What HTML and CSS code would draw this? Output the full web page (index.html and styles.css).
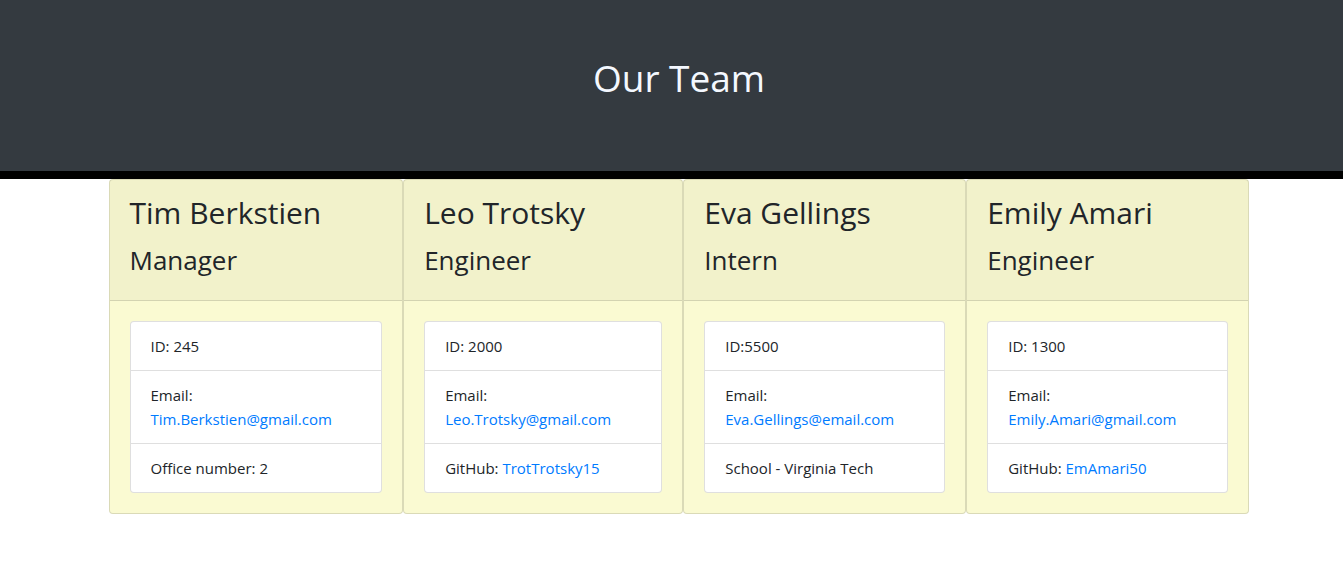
FILE: index.html
```html
<!DOCTYPE html>
<html lang="en">
<head>
  <meta charset="UTF-8" />
  <title>Our Team</title>
  <link rel="stylesheet" href="styles.css">
</head>
<body>
  <header class="team-header">
    <h1>Our Team</h1>
  </header>

  <main class="team-container">
    <div class="team-row">
      <div class="employee-card">
        <div class="card-header">
          <h2>Tim Berkstien</h2>
          <h3>Manager</h3>
        </div>
        <div class="card-body">
          <ul class="info-list">
            <li>ID: 245</li>
            <li>Email: <a href="mailto:Tim.Berkstien@gmail.com">Tim.Berkstien@gmail.com</a></li>
            <li>Office number: 2</li>
          </ul>
        </div>
      </div>

      <div class="employee-card">
        <div class="card-header">
          <h2>Leo Trotsky</h2>
          <h3>Engineer</h3>
        </div>
        <div class="card-body">
          <ul class="info-list">
            <li>ID: 2000</li>
            <li>Email: <a href="mailto:Leo.Trotsky@gmail.com">Leo.Trotsky@gmail.com</a></li>
            <li>GitHub: <a href="#">TrotTrotsky15</a></li>
          </ul>
        </div>
      </div>

      <div class="employee-card">
        <div class="card-header">
          <h2>Eva Gellings</h2>
          <h3>Intern</h3>
        </div>
        <div class="card-body">
          <ul class="info-list">
            <li>ID:5500</li>
            <li>Email: <a href="mailto:Eva.Gellings@email.com">Eva.Gellings@email.com</a></li>
            <li>School - Virginia Tech</li>
          </ul>
        </div>
      </div>

      <div class="employee-card">
        <div class="card-header">
          <h2>Emily Amari</h2>
          <h3>Engineer</h3>
        </div>
        <div class="card-body">
          <ul class="info-list">
            <li>ID: 1300</li>
            <li>Email: <a href="mailto:Emily.Amari@gmail.com">Emily.Amari@gmail.com</a></li>
            <li>GitHub: <a href="#">EmAmari50</a></li>
          </ul>
        </div>
      </div>
    </div>
  </main>
</body>
</html>
```

FILE: styles.css
```css
:root {
  --dark: #343a40;
  --text: #212529;
  --link: #007bff;
  --card-bg: #fafad2;
  --border: rgba(0, 0, 0, 0.125);
  --font: 'Segoe UI', 'Open Sans', sans-serif;
}

* {
  box-sizing: border-box;
}

body {
  margin: 0;
  font-family: var(--font);
  font-size: 15px;
  line-height: 24px;
  color: var(--text);
  background: #fff;
}

.team-header {
  background: var(--dark);
  border-bottom: 8px solid #000;
  height: 179px;
  padding-top: 54px;
  padding-left: 15px;
  text-align: center;
}

.team-header h1 {
  margin: 0;
  font-size: 37px;
  font-weight: 400;
  line-height: 48px;
  color: #f4f8ff;
}

.team-container {
  width: 1140px;
  margin-left: calc(50% - 563px);
}

.team-row {
  display: flex;
}

.employee-card {
  flex: 1 1 auto;
  background: var(--card-bg);
  border: 1px solid var(--border);
  border-radius: 4px;
}

.card-header {
  padding: 14px 20px 15px;
  background: rgba(0, 0, 0, 0.03);
  border-bottom: 1px solid var(--border);
}

.card-header h2 {
  margin: 0 0 11px 0;
  font-size: 30px;
  font-weight: 400;
  line-height: 38px;
}

.card-header h3 {
  margin: 0 0 8px 0;
  font-size: 26px;
  font-weight: 400;
  line-height: 34px;
}

.card-body {
  padding: 20px;
}

.info-list {
  list-style: none;
  margin: 0;
  padding: 0;
  background: #fff;
  border: 1px solid var(--border);
  border-radius: 4px;
}

.info-list li {
  padding: 12px 20px;
  border-top: 1px solid var(--border);
}

.info-list li:first-child {
  border-top: none;
}

.info-list a {
  color: var(--link);
  text-decoration: none;
}
```
